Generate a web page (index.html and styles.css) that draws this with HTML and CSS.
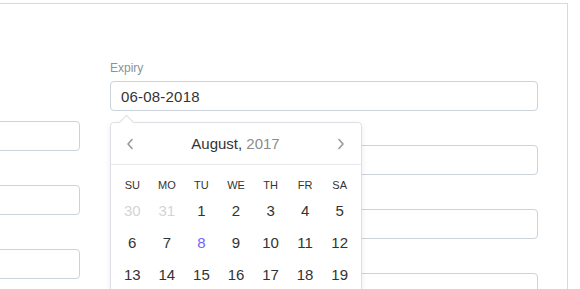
FILE: index.html
```html
<!DOCTYPE html>
<html>
<head>
<meta charset="utf-8">
<link rel="stylesheet" href="styles.css">
</head>
<body>
<div class="card">
  <div class="col col-left">
    <div class="field"><div class="label"></div><input class="input" type="text"></div>
    <div class="field"><div class="label"></div><input class="input" type="text"></div>
    <div class="field"><div class="label"></div><input class="input" type="text"></div>
  </div>
  <div class="col col-right">
    <div class="field field-date">
      <label class="label">Expiry</label>
      <input class="input" type="text" value="06-08-2018">
      <div class="picker">
        <div class="picker-head">
          <svg class="chev" width="8" height="12" viewBox="0 0 8 12"><path d="M6 1.5 L2 6 L6 10.5" fill="none" stroke="#999" stroke-width="1.6" stroke-linecap="round" stroke-linejoin="round"/></svg>
          <div class="month">August, <span class="year">2017</span></div>
          <svg class="chev" width="8" height="12" viewBox="0 0 8 12"><path d="M2 1.5 L6 6 L2 10.5" fill="none" stroke="#999" stroke-width="1.6" stroke-linecap="round" stroke-linejoin="round"/></svg>
        </div>
        <div class="days">
          <span class="dow">SU</span><span class="dow">MO</span><span class="dow">TU</span><span class="dow">WE</span><span class="dow">TH</span><span class="dow">FR</span><span class="dow">SA</span>
          <span class="day muted">30</span><span class="day muted">31</span><span class="day">1</span><span class="day">2</span><span class="day">3</span><span class="day">4</span><span class="day">5</span>
          <span class="day">6</span><span class="day">7</span><span class="day today">8</span><span class="day">9</span><span class="day">10</span><span class="day">11</span><span class="day">12</span>
          <span class="day">13</span><span class="day">14</span><span class="day">15</span><span class="day">16</span><span class="day">17</span><span class="day">18</span><span class="day">19</span>
        </div>
      </div>
    </div>
    <div class="field"><div class="label"></div><input class="input" type="text"></div>
    <div class="field"><div class="label"></div><input class="input" type="text"></div>
    <div class="field"><div class="label"></div><input class="input" type="text"></div>
  </div>
</div>
</body>
</html>
```

FILE: styles.css
```css
html, body {
  margin: 0;
  padding: 0;
  background: #fff;
  overflow: hidden;
  height: 289px;
}
body {
  font-family: "Liberation Sans", Arial, Helvetica, sans-serif;
  color: #333;
}
.card {
  margin: 3px 12px 0 -378px;
  border-top: 1px solid #d5dae0;
  border-right: 1px solid #d5dae0;
  border-left: 1px solid #d5dae0;
  padding: 55px 29px 0 29px;
  display: grid;
  grid-template-columns: 1fr 1fr;
  column-gap: 30px;
  height: 400px;
  background: #fff;
}
.col-left {
  padding-top: 40px;
}
.field {
  display: flex;
  flex-direction: column;
  margin-bottom: 12px;
}
.field-date {
  position: relative;
}
.label {
  font-size: 12px;
  line-height: 18px;
  height: 18px;
  color: #8a939b;
  margin-bottom: 4px;
}
.input {
  box-sizing: border-box;
  height: 30px;
  border: 1px solid #cdd3da;
  border-radius: 4px;
  padding: 0 10px;
  font-family: inherit;
  font-size: 15px;
  letter-spacing: 0.2px;
  color: #333;
  background: #fff;
  outline: none;
  margin: 0;
}
.picker {
  position: absolute;
  left: 0;
  top: 63px;
  width: 250px;
  height: 200px;
  background: #fff;
  border: 1px solid #dcdfe3;
  border-radius: 4px;
  box-shadow: 0 2px 6px rgba(0, 0, 0, 0.08);
  z-index: 2;
}
.picker::before {
  content: "";
  position: absolute;
  left: 10px;
  top: -6px;
  width: 10px;
  height: 10px;
  background: #fff;
  border-left: 1px solid #dcdfe3;
  border-top: 1px solid #dcdfe3;
  transform: rotate(45deg);
}
.picker-head {
  position: relative;
  display: flex;
  align-items: center;
  justify-content: space-between;
  height: 41px;
  padding: 0 16px 0 15px;
  border-bottom: 1px solid #e6e8eb;
  background: #fff;
  border-radius: 4px 4px 0 0;
}
.chev {
  display: block;
}
.month {
  font-size: 15px;
  color: #333;
}
.year {
  color: #8c8c8c;
}
.days {
  display: grid;
  grid-template-columns: repeat(7, 1fr);
  grid-auto-rows: 32px;
  grid-template-rows: 20px;
  padding: 10px 4px 0 4px;
}
.dow {
  font-size: 11px;
  line-height: 20px;
  text-align: center;
  color: #333;
}
.day {
  font-size: 15px;
  line-height: 32px;
  text-align: center;
  color: #333;
}
.day.muted {
  color: #d4d4d4;
}
.day.today {
  color: #6b66ff;
}
```
